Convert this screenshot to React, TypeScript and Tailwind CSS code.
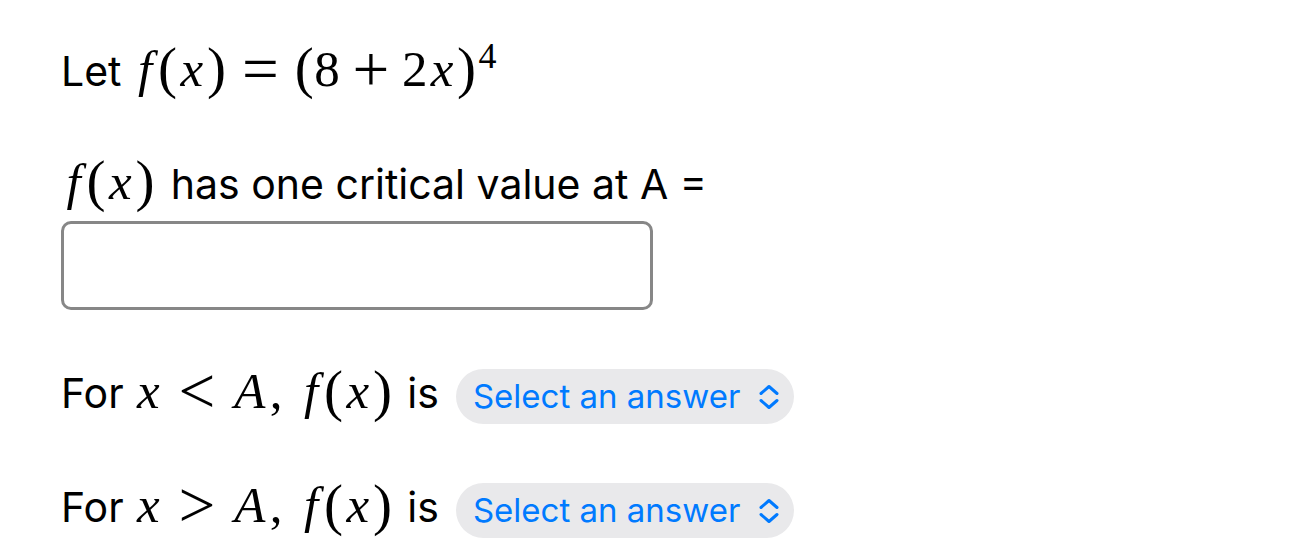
import React from 'react';

const mathFont = { fontFamily: '"Liberation Serif", "DejaVu Serif", serif' };

// one math glyph in a box with Computer Modern's advance width
const G: React.FC<{ w: string; children: React.ReactNode; className?: string }> = ({ w, children, className }) => (
  <span className={`inline-block text-center ${w} ${className ?? ''}`}>{children}</span>
);

const Paren: React.FC<{ c: string }> = ({ c }) => (
  <G w="w-[0.389em]">
    <span className="text-[1.12em] leading-none relative top-[0.02em]">{c}</span>
  </G>
);

const Op: React.FC<{ c: string; rel?: boolean }> = ({ c, rel }) => (
  <G w="w-[0.778em]" className={rel ? 'mx-[0.278em]' : 'mx-[0.222em]'}>
    <span className="text-[1.28em] leading-none relative top-[0.07em] font-light">{c}</span>
  </G>
);

const Math: React.FC<{ children: React.ReactNode; className?: string }> = ({ children, className }) => (
  <span className={`text-[51px] leading-none whitespace-nowrap ${className ?? ''}`} style={mathFont}>
    {children}
  </span>
);

const Fx = () => (
  <>
    <G w="w-[0.49em]" className="italic">f</G>
    <Paren c="(" />
    <G w="w-[0.572em]" className="italic">x</G>
    <Paren c=")" />
  </>
);

const Chevrons = () => (
  <svg width="22" height="26" viewBox="0 0 22 26" fill="none" stroke="#007aff" strokeWidth="3" strokeLinecap="round" strokeLinejoin="round">
    <path d="M3 9.5 L11 2.5 L19 9.5" />
    <path d="M3 16.5 L11 23.5 L19 16.5" />
  </svg>
);

const SelectPill = () => (
  <div className="flex items-center h-[55px] pl-[17px] pr-[14px] rounded-full bg-[#e9e9eb] text-[#007aff] text-[33px] leading-none">
    <span>Select an answer</span>
    <span className="ml-[18px] flex">
      <Chevrons />
    </span>
  </div>
);

const Compare: React.FC<{ op: string }> = ({ op }) => (
  <Math className="ml-[10px]">
    <G w="w-[0.572em]" className="italic">x</G>
    <Op c={op} rel />
    <G w="w-[0.75em]" className="italic">A</G>
    <G w="w-[0.278em]">,</G>
    <span className="inline-block w-[0.3em]" />
    <Fx />
  </Math>
);

const AnswerRow: React.FC<{ op: string; className?: string }> = ({ op, className }) => (
  <div className={`flex items-baseline ${className ?? ''}`}>
    <span>For</span>
    <Compare op={op} />
    <span className="ml-[15px] mr-[17px]">is</span>
    <SelectPill />
  </div>
);

export default function App() {
  return (
    <div className="w-[1290px] h-[555px] bg-white text-black overflow-hidden" style={{ fontFamily: 'Inter, "Noto Sans", sans-serif' }}>
      <div className="pl-[61px] pt-[32px] text-[41px] leading-none">
        <div className="flex items-baseline">
          <span>Let</span>
          <Math className="ml-[11px]">
            <Fx />
            <Op c="=" rel />
            <Paren c="(" />
            <G w="w-[0.5em]">8</G>
            <Op c="+" />
            <G w="w-[0.5em]">2</G>
            <G w="w-[0.572em]" className="italic">x</G>
            <Paren c=")" />
            <sup className="text-[36px] -top-[18px] ml-[2px]">4</sup>
          </Math>
        </div>

        <div className="flex items-baseline mt-[54px]">
          <Math>
            <Fx />
          </Math>
          <span className="ml-[16px]">has one critical value at A =</span>
        </div>

        <div className="mt-[13px] w-[592px] h-[89px] border-[3px] border-[#878787] rounded-[10px]" />

        <AnswerRow op="<" className="mt-[44px]" />
        <AnswerRow op=">" className="mt-[44px]" />
      </div>
    </div>
  );
}
